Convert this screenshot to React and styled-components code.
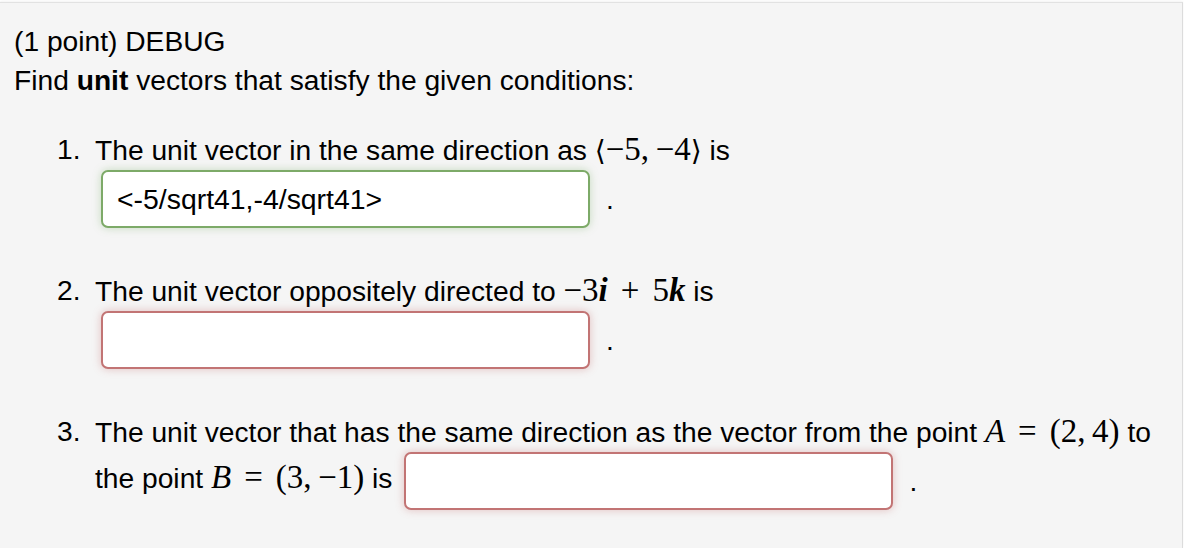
import React from 'react';
import styled, {createGlobalStyle} from 'styled-components';

const Global = createGlobalStyle`
  body{
    margin: 0;
    background: #ffffff;
    font-family: 'Liberation Sans', Arial, sans-serif;
  }
`;

const Panel = styled.div`
  width: 1183px;
  height: 546px;
  margin-top: 2px;
  box-sizing: border-box;
  background: #f5f5f5;
  border-top: 1px solid #e2e2e2;
  border-right: 1px solid #dcdcdc;
  box-shadow: 0 -1px 2px rgba(0,0,0,0.05);
  padding: 19px 0 0 14px;
  color: #000;
  font-size: 28.2px;
  line-height: 39px;
`;

const Line = styled.div`
  white-space: nowrap;
`;

const List = styled.ol`
  margin: 30px 0 0 0;
  padding: 0 0 0 81px;
  list-style: none;
`;

const Item = styled.li`
  position: relative;
  margin-bottom: 43px;
  &::before{
    content: '${p => p.n}.';
    position: absolute;
    left: -38px;
    top: 0;
  }
`;

const Row = styled.div`
  display: flex;
  align-items: center;
  height: 58px;
  white-space: nowrap;
  padding-left: ${p => p.indent ?? 6}px;
`;

const Lead = styled.span`
  padding-bottom: 6px;
`;

const Box = styled.div`
  box-sizing: border-box;
  width: 489px;
  height: 58px;
  background: #fff;
  border: 2px solid ${p => p.ok ? '#7daa68' : '#c27474'};
  border-radius: 7px;
  box-shadow: 0 0 9px ${p => p.ok ? 'rgba(110,170,90,0.35)' : 'rgba(190,90,90,0.35)'};
  padding: 0 0 0 14px;
  display: flex;
  align-items: center;
  font-size: 28.4px;
  line-height: 1;
  margin-left: ${p => p.gap || 0}px;
`;

const Dot = styled.span`
  margin-left: 16px;
  line-height: 1;
`;

const M = styled.span`
  font-family: 'Liberation Serif', 'DejaVu Serif', 'Times New Roman', serif;
  font-size: 33px;
  font-style: ${p => p.i ? 'italic' : 'normal'};
  font-weight: ${p => p.b ? 'bold' : 'normal'};
  margin: 0 ${p => p.op ? 13 : 0}px;
`;

const Sym = styled.span`
  font-family: 'DejaVu Serif', serif;
  font-size: 28px;
`;

export default function App() {
  return (
    <>
      <Global/>
      <Panel>
        <Line>(1 point) DEBUG</Line>
        <Line>Find <b>unit</b> vectors that satisfy the given conditions:</Line>
        <List>
          <Item n="1">
            <Line>
              The unit vector in the same direction as <Sym>⟨</Sym><M>−5,&#8201;−4</M><Sym>⟩</Sym> is
            </Line>
            <Row>
              <Box ok>&lt;-5/sqrt41,-4/sqrt41&gt;</Box>
              <Dot>.</Dot>
            </Row>
          </Item>
          <Item n="2">
            <Line>
              The unit vector oppositely directed to <M>−3</M><M i b>i</M><M op>+</M><M>5</M><M i b>k</M> is
            </Line>
            <Row>
              <Box/>
              <Dot>.</Dot>
            </Row>
          </Item>
          <Item n="3">
            <Line>
              The unit vector that has the same direction as the vector from the point <M i>A</M><M op>=</M><M>(2,&#8201;4)</M> to
            </Line>
            <Row indent={0}>
              <Lead>the point&nbsp;<M i>B</M><M op>=</M><M>(3,&#8201;−1)</M>&nbsp;is</Lead>
              <Box gap={12}/>
              <Dot>.</Dot>
            </Row>
          </Item>
        </List>
      </Panel>
    </>
  );
}
